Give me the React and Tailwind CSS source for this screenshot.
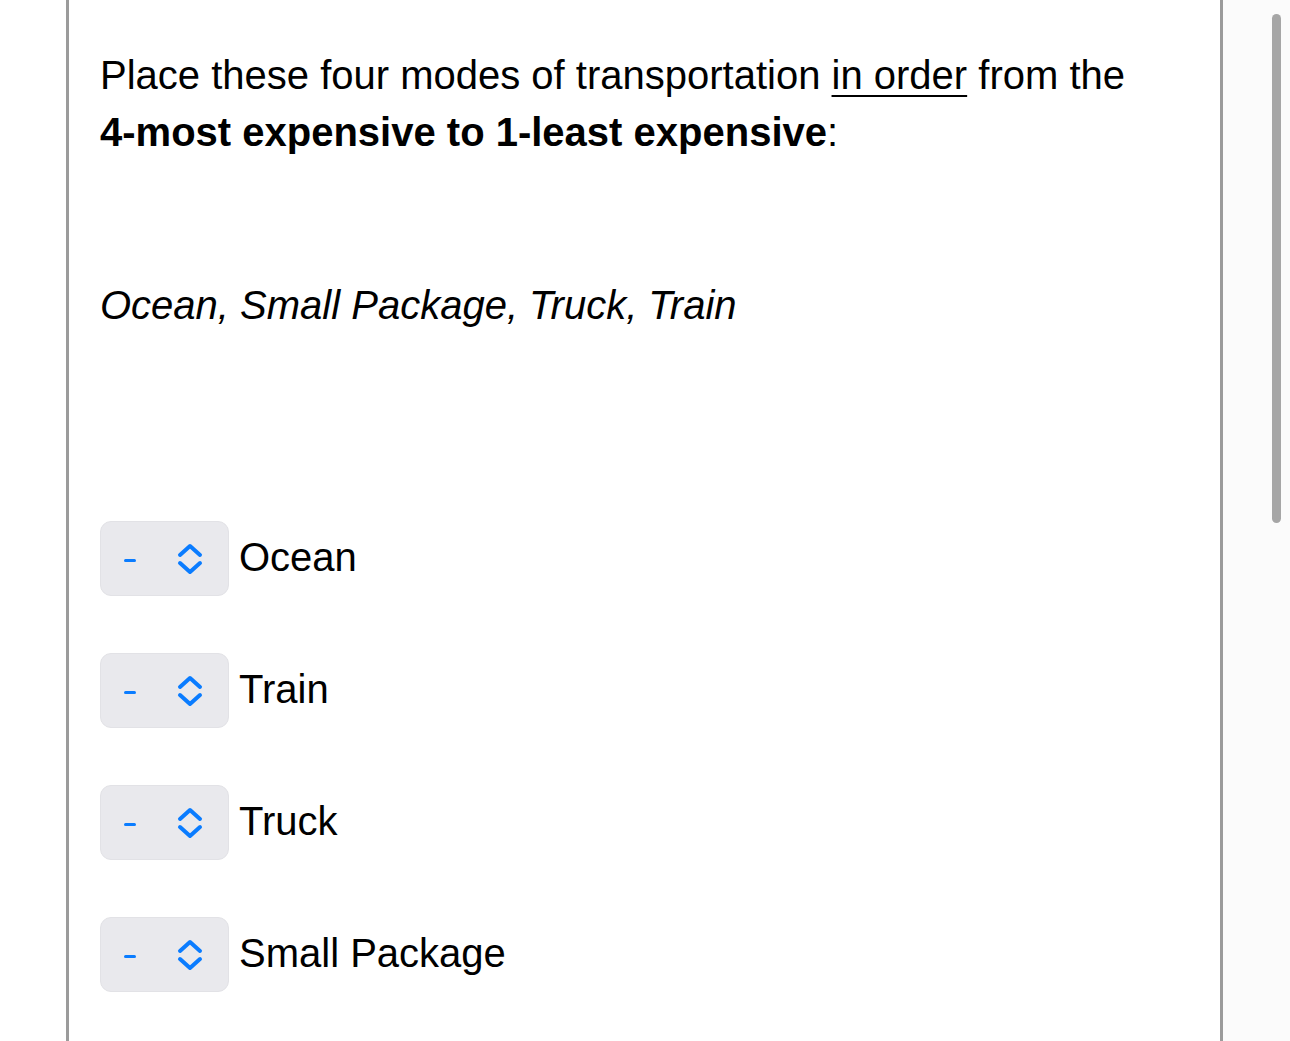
import React from 'react';

const items = ['Ocean', 'Train', 'Truck', 'Small Package'];

const Chevrons = () => (
  <svg width="30" height="34" viewBox="0 0 30 34" fill="none" stroke="#0a7cff" strokeWidth="4" strokeLinecap="round" strokeLinejoin="round">
    <path d="M5 13 L15 4 L25 13" />
    <path d="M5 21 L15 30 L25 21" />
  </svg>
);

const RankSelect = ({ label }) => (
  <div className="flex items-center gap-[10px]">
    <div className="w-[129px] h-[75px] rounded-[11px] bg-[#e9e9ed] border border-[#e2e2e6] flex items-center">
      <span className="ml-[23px] w-[12px] h-[3px] mt-[4px] bg-[#0a7cff] rounded-sm" />
      <span className="ml-[39px] mt-[1px] flex"><Chevrons /></span>
    </div>
    <span className="text-[40px] leading-none text-black -mt-[3px]">{label}</span>
  </div>
);

export default function App() {
  return (
    <div className="w-[1290px] h-[1041px] bg-white flex overflow-hidden relative" style={{ fontFamily: '"Liberation Sans", Arial, sans-serif' }}>
      <div className="w-[66px] shrink-0" />
      <div className="w-[1157px] shrink-0 border-x-[3px] border-[#9b9b9b] pl-[31px] pr-[40px] pt-[47px]">
        <p className="text-[40px] leading-[57px] text-black">
          Place these four modes of transportation <span className="underline underline-offset-[6px] decoration-[2px]">in order</span> from the{' '}
          <b><span className="whitespace-nowrap">4-most</span> expensive to 1-least expensive</b>:
        </p>
        <p className="text-[40px] leading-[57px] italic mt-[116px]">Ocean, Small Package, Truck, Train</p>
        <div className="mt-[187px] flex flex-col gap-[57px]">
          {items.map((it) => (
            <RankSelect key={it} label={it} />
          ))}
        </div>
      </div>
      <div className="flex-1 bg-[#fbfbfb] relative">
        <div className="absolute left-[49px] top-[14px] w-[9px] h-[509px] rounded-full bg-[#a6a6a6]" />
      </div>
    </div>
  );
}
